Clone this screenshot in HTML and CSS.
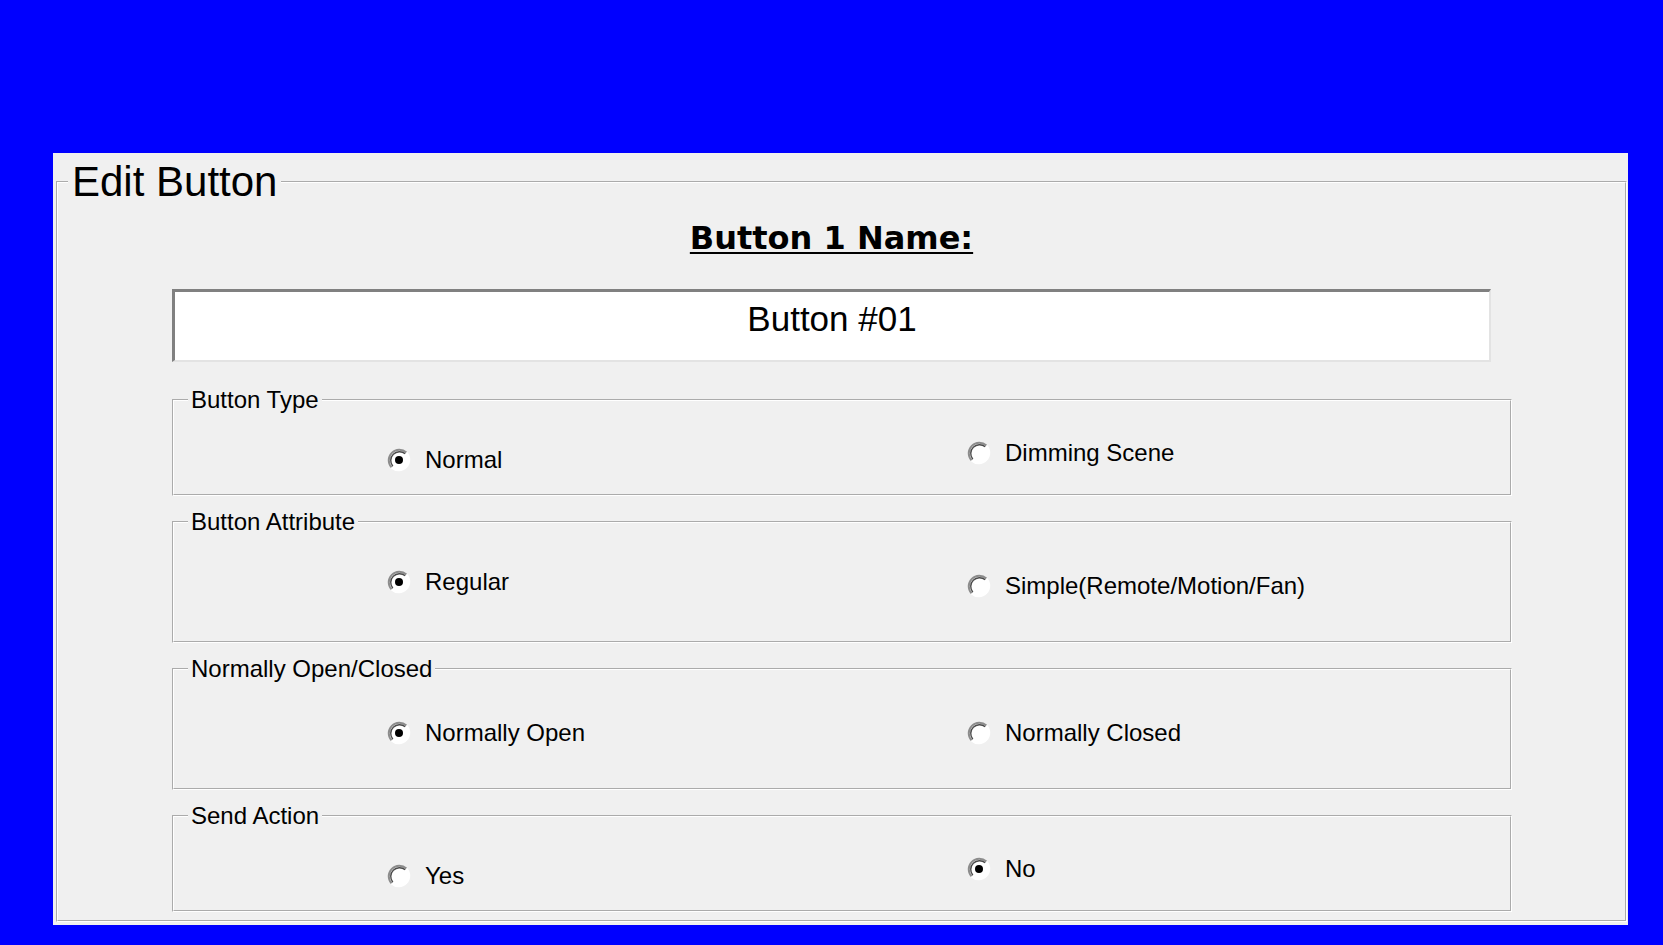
FILE: index.html
```html
<!DOCTYPE html>
<html lang="en">
<head>
<meta charset="utf-8">
<title>Edit Button</title>
<link rel="stylesheet" href="styles.css">
</head>
<body>
<div class="panel">
  <fieldset class="frame">
    <legend class="frame-title">Edit Button</legend>
    <div class="content">
      <h1 class="name-heading">Button 1 Name:</h1>
      <div class="textbox">Button #01</div>

      <fieldset class="group group--first">
        <legend class="group-title">Button Type</legend>
        <div class="options">
          <div class="option">
            <svg class="radio" viewBox="0 0 24 24" width="24" height="24"><circle cx="12" cy="12" r="10.5" fill="#fff"/><path d="M4.58 19.42A10.5 10.5 0 0 1 19.42 4.58" fill="none" stroke="#8c8c8c" stroke-width="2"/><path d="M5.8 18.2A8.8 8.8 0 0 1 18.2 5.8" fill="none" stroke="#4a4a4a" stroke-width="1.4"/><path d="M19.42 4.58A10.5 10.5 0 0 1 4.58 19.42" fill="none" stroke="#ffffff" stroke-width="2"/><circle cx="12" cy="12" r="4" fill="#000"/></svg>
            <span class="option-text">Normal</span>
          </div>
          <div class="option option--hi">
            <svg class="radio" viewBox="0 0 24 24" width="24" height="24"><circle cx="12" cy="12" r="10.5" fill="#fff"/><path d="M4.58 19.42A10.5 10.5 0 0 1 19.42 4.58" fill="none" stroke="#8c8c8c" stroke-width="2"/><path d="M5.8 18.2A8.8 8.8 0 0 1 18.2 5.8" fill="none" stroke="#4a4a4a" stroke-width="1.4"/><path d="M19.42 4.58A10.5 10.5 0 0 1 4.58 19.42" fill="none" stroke="#ffffff" stroke-width="2"/></svg>
            <span class="option-text">Dimming Scene</span>
          </div>
        </div>
      </fieldset>

      <fieldset class="group group--tall">
        <legend class="group-title">Button Attribute</legend>
        <div class="options">
          <div class="option">
            <svg class="radio" viewBox="0 0 24 24" width="24" height="24"><circle cx="12" cy="12" r="10.5" fill="#fff"/><path d="M4.58 19.42A10.5 10.5 0 0 1 19.42 4.58" fill="none" stroke="#8c8c8c" stroke-width="2"/><path d="M5.8 18.2A8.8 8.8 0 0 1 18.2 5.8" fill="none" stroke="#4a4a4a" stroke-width="1.4"/><path d="M19.42 4.58A10.5 10.5 0 0 1 4.58 19.42" fill="none" stroke="#ffffff" stroke-width="2"/><circle cx="12" cy="12" r="4" fill="#000"/></svg>
            <span class="option-text">Regular</span>
          </div>
          <div class="option option--lo">
            <svg class="radio" viewBox="0 0 24 24" width="24" height="24"><circle cx="12" cy="12" r="10.5" fill="#fff"/><path d="M4.58 19.42A10.5 10.5 0 0 1 19.42 4.58" fill="none" stroke="#8c8c8c" stroke-width="2"/><path d="M5.8 18.2A8.8 8.8 0 0 1 18.2 5.8" fill="none" stroke="#4a4a4a" stroke-width="1.4"/><path d="M19.42 4.58A10.5 10.5 0 0 1 4.58 19.42" fill="none" stroke="#ffffff" stroke-width="2"/></svg>
            <span class="option-text">Simple(Remote/Motion/Fan)</span>
          </div>
        </div>
      </fieldset>

      <fieldset class="group group--tall">
        <legend class="group-title">Normally Open/Closed</legend>
        <div class="options">
          <div class="option option--lo">
            <svg class="radio" viewBox="0 0 24 24" width="24" height="24"><circle cx="12" cy="12" r="10.5" fill="#fff"/><path d="M4.58 19.42A10.5 10.5 0 0 1 19.42 4.58" fill="none" stroke="#8c8c8c" stroke-width="2"/><path d="M5.8 18.2A8.8 8.8 0 0 1 18.2 5.8" fill="none" stroke="#4a4a4a" stroke-width="1.4"/><path d="M19.42 4.58A10.5 10.5 0 0 1 4.58 19.42" fill="none" stroke="#ffffff" stroke-width="2"/><circle cx="12" cy="12" r="4" fill="#000"/></svg>
            <span class="option-text">Normally Open</span>
          </div>
          <div class="option option--lo">
            <svg class="radio" viewBox="0 0 24 24" width="24" height="24"><circle cx="12" cy="12" r="10.5" fill="#fff"/><path d="M4.58 19.42A10.5 10.5 0 0 1 19.42 4.58" fill="none" stroke="#8c8c8c" stroke-width="2"/><path d="M5.8 18.2A8.8 8.8 0 0 1 18.2 5.8" fill="none" stroke="#4a4a4a" stroke-width="1.4"/><path d="M19.42 4.58A10.5 10.5 0 0 1 4.58 19.42" fill="none" stroke="#ffffff" stroke-width="2"/></svg>
            <span class="option-text">Normally Closed</span>
          </div>
        </div>
      </fieldset>

      <fieldset class="group">
        <legend class="group-title">Send Action</legend>
        <div class="options">
          <div class="option">
            <svg class="radio" viewBox="0 0 24 24" width="24" height="24"><circle cx="12" cy="12" r="10.5" fill="#fff"/><path d="M4.58 19.42A10.5 10.5 0 0 1 19.42 4.58" fill="none" stroke="#8c8c8c" stroke-width="2"/><path d="M5.8 18.2A8.8 8.8 0 0 1 18.2 5.8" fill="none" stroke="#4a4a4a" stroke-width="1.4"/><path d="M19.42 4.58A10.5 10.5 0 0 1 4.58 19.42" fill="none" stroke="#ffffff" stroke-width="2"/></svg>
            <span class="option-text">Yes</span>
          </div>
          <div class="option option--hi">
            <svg class="radio" viewBox="0 0 24 24" width="24" height="24"><circle cx="12" cy="12" r="10.5" fill="#fff"/><path d="M4.58 19.42A10.5 10.5 0 0 1 19.42 4.58" fill="none" stroke="#8c8c8c" stroke-width="2"/><path d="M5.8 18.2A8.8 8.8 0 0 1 18.2 5.8" fill="none" stroke="#4a4a4a" stroke-width="1.4"/><path d="M19.42 4.58A10.5 10.5 0 0 1 4.58 19.42" fill="none" stroke="#ffffff" stroke-width="2"/><circle cx="12" cy="12" r="4" fill="#000"/></svg>
            <span class="option-text">No</span>
          </div>
        </div>
      </fieldset>
    </div>
  </fieldset>
</div>
</body>
</html>
```

FILE: styles.css
```css
html, body {
  margin: 0;
  padding: 0;
}

body {
  background: #0000ff;
  height: 945px;
  overflow: hidden;
  font-family: "Liberation Sans", Arial, sans-serif;
  color: #000;
}

.panel {
  box-sizing: border-box;
  width: 1575px;
  margin: 153px 0 0 53px;
  padding: 5px 1px 3px 3px;
  background: #f0f0f0;
}

.frame {
  margin: 0;
  padding: 0 0 8px;
  border: 2px groove #ffffff;
  min-width: 0;
}

.frame-title {
  margin-left: 10px;
  padding: 0 4px;
  font-size: 42px;
  line-height: 47px;
}

.content {
  margin-left: 114px;
  width: 1340px;
}

.name-heading {
  width: 1319px;
  margin: 15px 0 0;
  font-family: "DejaVu Sans", Verdana, sans-serif;
  font-weight: bold;
  font-size: 32px;
  line-height: 37px;
  text-align: center;
  text-decoration: underline;
  text-decoration-thickness: 2px;
  text-underline-offset: 3px;
}

.textbox {
  box-sizing: border-box;
  width: 1319px;
  height: 73px;
  margin-top: 32px;
  padding-top: 7px;
  background: #fff;
  border-style: solid;
  border-width: 3px 2px 2px 3px;
  border-color: #808080 #e3e3e3 #e3e3e3 #808080;
  font-size: 35px;
  line-height: 40px;
  text-align: center;
}

.group {
  margin: 12px 0 0;
  padding: 0 0 20px;
  border: 2px groove #ffffff;
  min-width: 0;
}

.group--first {
  margin-top: 24px;
}

.group--tall {
  padding-bottom: 41px;
}

.group-title {
  margin-left: 14px;
  padding: 0 3px;
  font-size: 24px;
  line-height: 28px;
}

.options {
  display: grid;
  grid-template-columns: 580px 1fr;
  align-items: start;
  padding-left: 213px;
}

.option {
  display: flex;
  align-items: center;
  gap: 14px;
  height: 28px;
  margin-top: 32px;
  font-size: 24px;
  line-height: 28px;
  white-space: nowrap;
}

.option--hi {
  margin-top: 25px;
}

.option--lo {
  margin-top: 36px;
}

.radio {
  display: block;
  flex: none;
}
```
